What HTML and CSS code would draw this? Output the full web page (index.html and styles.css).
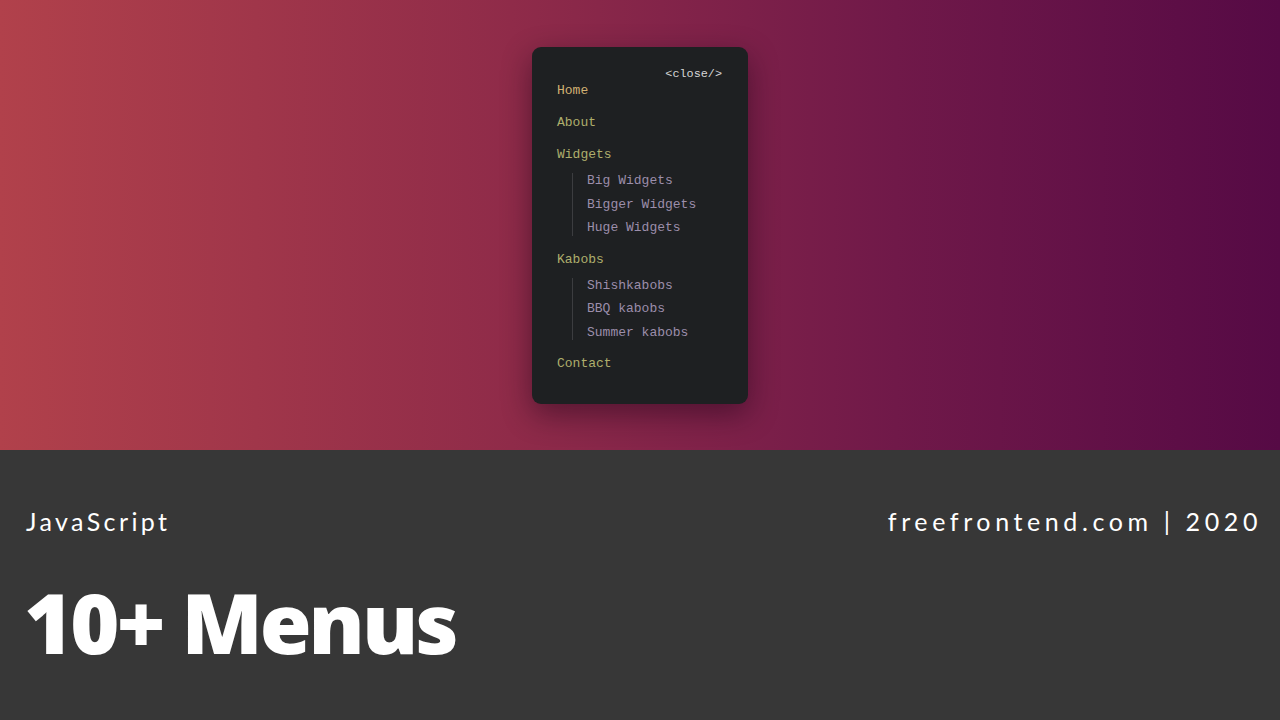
FILE: index.html
```html
<!DOCTYPE html>
<html>
<head>
<meta charset="utf-8">
<link rel="stylesheet" href="styles.css">
</head>
<body>
<div class="stage">
  <nav class="menu">
    <div class="close">&lt;close/&gt;</div>
    <ul class="nav">
      <li class="home">Home</li>
      <li>About</li>
      <li>Widgets
        <ul class="sub">
          <li>Big Widgets</li>
          <li>Bigger Widgets</li>
          <li>Huge Widgets</li>
        </ul>
      </li>
      <li>Kabobs
        <ul class="sub">
          <li>Shishkabobs</li>
          <li>BBQ kabobs</li>
          <li>Summer kabobs</li>
        </ul>
      </li>
      <li>Contact</li>
    </ul>
  </nav>
</div>
<footer class="caption">
  <div class="row">
    <span class="tag">JavaScript</span>
    <span class="site">freefrontend.com | 2020</span>
  </div>
  <h1 class="title">10+ Menus</h1>
</footer>
</body>
</html>
```
FILE: styles.css
```css
html, body { margin: 0; padding: 0; }
body { width: 1280px; height: 720px; overflow: hidden; background: #373737; }
.stage {
  height: 450px;
  background: linear-gradient(90deg, #b1414b 0%, #8f2b49 40%, #701949 70%, #560a45 100%);
  display: flex;
  justify-content: center;
  padding-top: 47px;
  box-sizing: border-box;
}
.menu {
  width: 216px;
  height: 357px;
  box-sizing: border-box;
  background: #1e2022;
  border-radius: 9px;
  box-shadow: 0 10px 30px rgba(20, 0, 20, 0.45);
  padding: 20px 26px 0 25px;
  font-family: "Liberation Mono", "DejaVu Sans Mono", monospace;
}
.close {
  text-align: right;
  font-size: 11.8px;
  line-height: 14px;
  color: #d6d6d6;
}
.nav {
  list-style: none;
  margin: 2px 0 0 0;
  padding: 0;
  font-size: 13px;
  line-height: 16px;
  color: #aeae6c;
}
.nav > li { margin-bottom: 16px; }
.nav > li.home { color: #d2b173; }
.sub {
  list-style: none;
  position: relative;
  margin: 6px 0 -4px 15px;
  padding: 0 0 0 15px;
  color: #9c8eab;
  line-height: 23.5px;
}
.sub::before {
  content: "";
  position: absolute;
  left: 0;
  top: 4px;
  bottom: 4px;
  width: 1px;
  background: #3c3d40;
}
.caption {
  padding: 0 22px 0 26px;
  color: #ffffff;
  font-family: "Lato", "Open Sans", sans-serif;
}
.row {
  display: flex;
  justify-content: space-between;
  align-items: center;
  padding-top: 55px;
  height: 32px;
  font-size: 25px;
  font-weight: 400;
}
.tag { letter-spacing: 3.4px; }
.site { letter-spacing: 4.6px; margin-right: -4px; }
.title {
  margin: 40px 0 0 -2px;
  font-family: "Open Sans", "Lato", sans-serif;
  font-weight: 800;
  font-size: 84px;
  line-height: 90px;
  letter-spacing: -3px;
}
```
